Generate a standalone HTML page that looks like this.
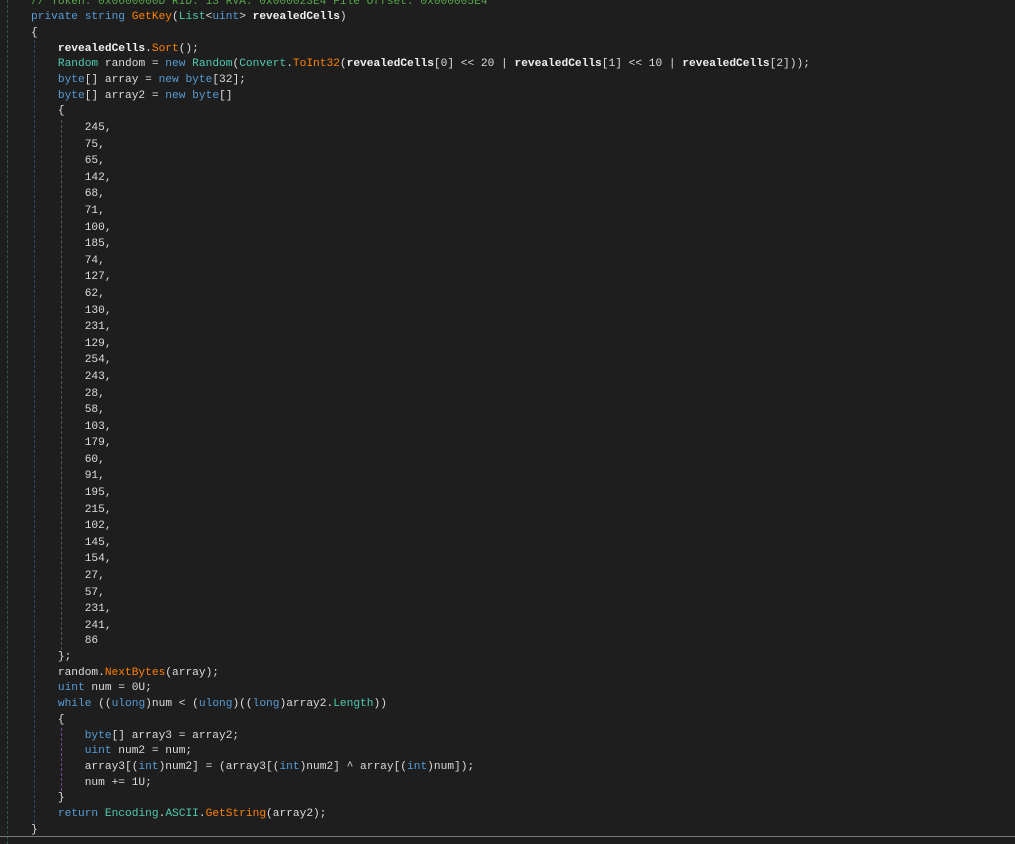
<!DOCTYPE html>
<html><head><meta charset="utf-8"><style>
html,body{margin:0;padding:0;background:#1e1e1e;width:1015px;height:844px;overflow:hidden;position:relative}
#code{position:absolute;left:31px;top:-5.5px;font-family:"Liberation Mono",monospace;font-size:11.2px;line-height:15.7px;color:#dcdcdc;white-space:pre}
#code div{height:15.7px}
#code div.q{height:16.6px;line-height:16.6px}
.k{color:#569cd6}.t{color:#4ec9b0}.m{color:#ff8000}.c{color:#57a64a}.b{font-weight:bold;color:#f0f0f0}
.g{position:absolute;width:0;border-left:1px dashed}
</style></head><body>
<div class="g" style="left:7px;top:0;height:844px;border-color:#2f5a45"></div>
<div class="g" style="left:34px;top:40px;height:788px;border-color:#2a4a6a"></div>
<div class="g" style="left:61px;top:120px;height:530px;border-color:#555"></div>
<div class="g" style="left:61px;top:728px;height:68px;border-color:#7a4a9a"></div>
<div id="code"><div><span class="c">// Token: 0x0600000D RID: 13 RVA: 0x000023E4 File Offset: 0x000005E4</span></div><div><span class="k">private</span> <span class="k">string</span> <span class="m">GetKey</span>(<span class="t">List</span>&lt;<span class="k">uint</span>&gt; <span class="b">revealedCells</span>)</div><div>{</div><div>    <span class="b">revealedCells</span>.<span class="m">Sort</span>();</div><div>    <span class="t">Random</span> random = <span class="k">new</span> <span class="t">Random</span>(<span class="t">Convert</span>.<span class="m">ToInt32</span>(<span class="b">revealedCells</span>[0] &lt;&lt; 20 | <span class="b">revealedCells</span>[1] &lt;&lt; 10 | <span class="b">revealedCells</span>[2]));</div><div>    <span class="k">byte</span>[] array = <span class="k">new</span> <span class="k">byte</span>[32];</div><div>    <span class="k">byte</span>[] array2 = <span class="k">new</span> <span class="k">byte</span>[]</div><div>    {</div><div class="q">        245,</div><div class="q">        75,</div><div class="q">        65,</div><div class="q">        142,</div><div class="q">        68,</div><div class="q">        71,</div><div class="q">        100,</div><div class="q">        185,</div><div class="q">        74,</div><div class="q">        127,</div><div class="q">        62,</div><div class="q">        130,</div><div class="q">        231,</div><div class="q">        129,</div><div class="q">        254,</div><div class="q">        243,</div><div class="q">        28,</div><div class="q">        58,</div><div class="q">        103,</div><div class="q">        179,</div><div class="q">        60,</div><div class="q">        91,</div><div class="q">        195,</div><div class="q">        215,</div><div class="q">        102,</div><div class="q">        145,</div><div class="q">        154,</div><div class="q">        27,</div><div class="q">        57,</div><div class="q">        231,</div><div class="q">        241,</div><div>        86</div><div>    };</div><div>    random.<span class="m">NextBytes</span>(array);</div><div>    <span class="k">uint</span> num = 0U;</div><div>    <span class="k">while</span> ((<span class="k">ulong</span>)num &lt; (<span class="k">ulong</span>)((<span class="k">long</span>)array2.<span class="t">Length</span>))</div><div>    {</div><div>        <span class="k">byte</span>[] array3 = array2;</div><div>        <span class="k">uint</span> num2 = num;</div><div>        array3[(<span class="k">int</span>)num2] = (array3[(<span class="k">int</span>)num2] ^ array[(<span class="k">int</span>)num]);</div><div>        num += 1U;</div><div>    }</div><div>    <span class="k">return</span> <span class="t">Encoding</span>.<span class="t">ASCII</span>.<span class="m">GetString</span>(array2);</div><div>}</div></div>
<div style="position:absolute;left:0;top:836px;width:1015px;height:1px;background:#777"></div>
</body></html>
